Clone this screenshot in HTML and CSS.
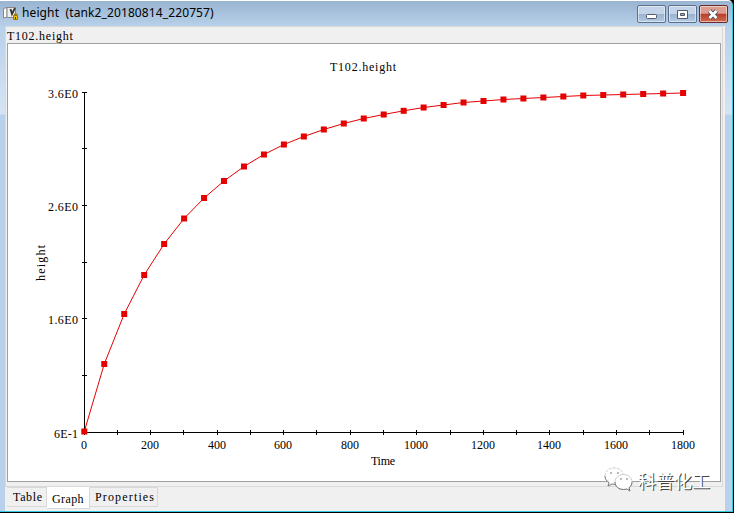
FILE: index.html
```html
<!DOCTYPE html>
<html lang="en">
<head>
    <meta charset="UTF-8">
    <title>height (tank2_20180814_220757)</title>
    <link rel="stylesheet" href="styles.css">
</head>
<body>
    <div class="window">
        <div class="title-bar">
            <svg class="app-icon" width="17" height="16" viewBox="0 0 17 16">
                <path d="M.5 2.500L4 1.500V11L.5 12z" fill="#fff" stroke="#888"/>
                <path d="M4 1.500h8.500v10H4z" fill="#eee" stroke="#888"/>
                <path d="M7.500 3l1.500 5 3-6" fill="none" stroke="#333" stroke-width="1.800"/>
                <path d="M11.500 9.500V8h2.500v1.500" fill="none" stroke="#907000"/>
                <path d="M10.500 9.500h4v4h-4z" fill="#f0c800" stroke="#a07800"/>
                <path d="M12 11h1v2h-1z" fill="#443300"/>
            </svg>
            <span class="title">height&nbsp; (tank2_20180814_220757)</span>
            <div class="window-buttons">
                <button class="win-btn" aria-label="Minimize">
                    <svg width="28" height="17"><rect x="9.500" y="8.500" width="10" height="4" rx="1" fill="#fff" stroke="#53586b"/></svg>
                </button>
                <button class="win-btn" aria-label="Maximize">
                    <svg width="28" height="17"><path d="M9.500 4.500h10v8h-10z" fill="#fff" stroke="#53586b"/><path d="M12.500 7.500h4v2h-4z" fill="#8faccc" stroke="#53586b"/></svg>
                </button>
                <button class="win-btn close" aria-label="Close">
                    <svg width="28" height="17"><path d="M10.500 5l7 7M17.500 5l-7 7" stroke="#53586b" stroke-width="4.600"/><path d="M10.500 5l7 7M17.500 5l-7 7" stroke="#fff" stroke-width="2.600"/></svg>
                </button>
            </div>
        </div>

        <div class="client">
            <div class="page">
                <div class="series-name">T102.height</div>
                <div class="graph">
                    <svg id="chart" width="712" height="437" viewBox="8 44 712 437"></svg>
                </div>
            </div>
            <div class="tabs">
                <div class="tab table">Table</div>
                <div class="tab active">Graph</div>
                <div class="tab properties">Properties</div>
            </div>
        </div>

        <div class="watermark">
            <svg width="30" height="26" viewBox="0 0 30 26">
                <path d="M10 1C4.500 1 1 4.500 1 9c0 3 1.500 5 4 6.500L4 19l4-2c1.500.4 3 .4 4 .2L19 7c-.5-3.500-4-6-9-6z" fill="#fff"/>
                <path d="M1 9c0 3 1.500 5 4 6.500L4 19l4-2c1.500.4 3 .4 4 .2" fill="none" stroke="#777"/>
                <path d="M1 9C1 4.500 4.500 1 10 1c5 0 8.500 2.500 9 6" fill="none" stroke="#ccc" stroke-dasharray="3 1"/>
                <path d="M19.500 7.500c-5 0-8.500 3.300-8.500 7.500s3.500 7.500 8.500 7.500c1.200 0 2.200-.2 3.200-.5l3.300 2-1-3.200c2-1.500 3-3.400 3-5.800 0-4.200-3.500-7.500-8.500-7.500z" fill="#fff" stroke="#ccc"/>
                <path d="M11 15c0 4.200 3.500 7.500 8.500 7.500 1.200 0 2.200-.2 3.200-.5l3.300 2-1-3.200c2-1.500 3-3.400 3-5.800" fill="none" stroke="#777"/>
                <path d="M6 6h2M13 6h2M16 12h2M22 12h2" stroke="#777"/>
            </svg>
            <span>科普化工</span>
        </div>
    </div>

    <script src="chart.js"></script>
</body>
</html>
```
FILE: styles.css
```css
* {
    margin: 0;
    padding: 0;
    box-sizing: border-box;
}

body {
    width: 734px;
    height: 513px;
    overflow: hidden;
    background: #000;
}

.window {
    position: relative;
    width: 733px;
    height: 512px;
    padding: 0 7px 0 5px;
    border-top: 1px solid #fff;
    border-right: 1px solid #35c9e0;
    border-bottom: 1px solid #35c9e0;
    border-radius: 0 5px 0 0;
    background: linear-gradient(#99b4d1, #b9d1ea 26px, #d5e4f4 113px, #b9d1ea 114px);
}

.title-bar {
    display: flex;
    height: 25px;
    margin: 0 -3px 0 -2px;
    align-items: flex-start;
}

.app-icon {
    margin-top: 5px;
}

.title {
    margin-left: 2px;
    font: 12px/24px "Noto Sans", sans-serif;
    letter-spacing: 0.11px;
    white-space: nowrap;
    color: #000;
}

.window-buttons {
    display: flex;
    gap: 2px;
    margin: 4px 0 0 auto;
}

.win-btn {
    width: 29px;
    height: 18px;
    border: 1px solid #5b6f8c;
    border-radius: 2px;
    background: linear-gradient(#c3d4e8 48%, #99b1cf 50%, #b5cbe4);
    box-shadow: inset 0 0 0 1px rgba(255, 255, 255, 0.5);
}

.win-btn svg {
    display: block;
    margin: -1px;
}

.win-btn.close {
    border-color: #6b2a2a;
    background: linear-gradient(#dc9c90 46%, #b93b26 50%, #cf6b50);
}

.client {
    height: 485px;
    background: #f0f0f0;
}

.page {
    width: 718px;
    height: 461px;
    padding: 2px 0 0 1px;
    border: 1px solid #d9d9d9;
}

.series-name,
.tab,
#chart text {
    font-family: "Liberation Serif", serif;
    font-size: 12px;
    color: #000;
}

.series-name {
    height: 14px;
    line-height: 15px;
    letter-spacing: 0.75px;
}

.graph {
    width: 714px;
    height: 439px;
    border: 1px solid #a0a0a0;
    background: #fff;
}

#chart {
    display: block;
}

.axis {
    stroke: #000;
    shape-rendering: crispEdges;
}

.curve {
    fill: none;
    stroke: #e60000;
}

.marker {
    fill: #e60000;
}

.tabs {
    display: flex;
    align-items: flex-start;
    padding-left: 2px;
}

.tab {
    height: 20px;
    padding-left: 5px;
    border: 1px solid #d9d9d9;
    border-left: 0;
    line-height: 19px;
}

.tab.table {
    width: 40px;
    padding-left: 6px;
    letter-spacing: 0.65px;
}

.tab.active {
    width: 43px;
    height: 22px;
    line-height: 23px;
    letter-spacing: 0.4px;
    border-top-color: #fff;
    background: #fff;
}

.tab.properties {
    width: 68px;
    letter-spacing: 1.15px;
}

.watermark {
    position: absolute;
    left: 604px;
    top: 466px;
    display: flex;
    gap: 4px;
    font: 18px/26px "Noto Sans CJK SC", sans-serif;
    color: #fff;
    text-shadow: 1px 1px 0 #444;
}
```
FILE: chart.js
```js
const chart = document.getElementById('chart');

function add(name, attrs, text) {
    const el = document.createElementNS('http://www.w3.org/2000/svg', name);
    Object.entries(attrs).forEach(([key, value]) => el.setAttribute(key, value));
    if (text) el.textContent = text;
    chart.appendChild(el);
}

// Labels use a fixed 6px cell per character
function label(text, x, y, extra) {
    add('text', { x, y, textLength: text.length * 6, ...extra }, text);
}

label('T102.height', 330, 71);
label('Time', 371, 465);
label('height', 0, 0, { transform: 'translate(45 281) rotate(-90)' });

// Axes
add('path', { class: 'axis', d: 'M84.5 93V433M84 432.5H684' });

['3.6E0', '', '2.6E0', '', '1.6E0', '', '6E-1'].forEach((text, i) => {
    const y = Math.floor(92 + i * 56.67) + 0.5;
    add('path', { class: 'axis', d: `M82 ${y}H87` });
    if (text) label(text, 78 - text.length * 6, Math.round(y + 5.5));
});

for (let i = 0; i <= 18; i++) {
    const x = Math.floor(84 + i * 33.28) + 0.5;
    add('path', { class: 'axis', d: `M${x} 430V435` });
    if (i % 2 === 0) {
        const text = String(i * 100);
        label(text, Math.round(x - text.length * 3 - 1), 449);
    }
}

// One sample every 60 time units
const heights = [431.5, 364, 314, 275, 244, 218.5, 198, 181, 166.5, 154.5, 144.5,
    136.5, 129.5, 123.5, 118.5, 114.5, 110.8, 107.5, 105, 102.5, 101, 99.5, 98.5,
    97.5, 96.5, 95.5, 95, 94.5, 94, 93.5, 93];
const points = heights.map((y, i) => [84.3 + i * 19.96, y]);

add('polyline', { class: 'curve', points: points.join(' ') });
points.forEach(([x, y]) => {
    add('rect', { class: 'marker', x: x - 3, y: y - 3, width: 6, height: 6 });
});
```
